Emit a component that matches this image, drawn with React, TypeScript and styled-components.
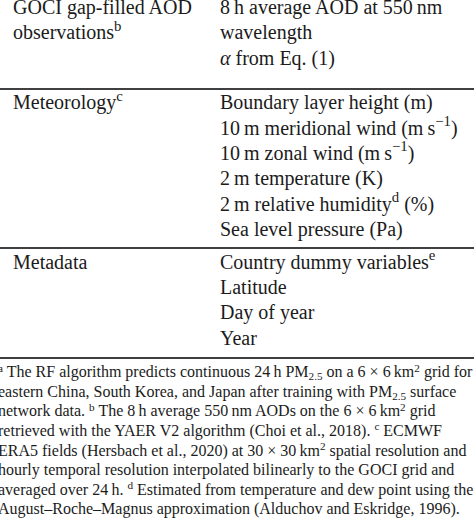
import React from 'react'
import styled, { createGlobalStyle } from 'styled-components'

// Styled Components
const GlobalStyle = createGlobalStyle`
  html, body {
    margin: 0;
    padding: 0;
    background: #ffffff;
    overflow: hidden;
  }
  body {
    font-family: "Liberation Serif", "Times New Roman", serif;
    color: #1b1b1b;
  }
`;

const Page = styled.div`
  width: 474px;
  height: 520px;
  overflow: hidden;
`;

const Table = styled.div`
  margin-top: -5px;
  display: flex;
  flex-direction: column;
`;

const Group = styled.div<{ $padTop: number; $padBottom: number }>`
  display: grid;
  grid-template-columns: 207px 1fr;
  padding: ${p => p.$padTop}px 0 ${p => p.$padBottom}px 13px;
  border-bottom: 2px solid #404040;
  font-size: 20px;
  line-height: 25.4px;
`;

const Label = styled.div`
  white-space: nowrap;
`;

const Values = styled.div`
  display: flex;
  flex-direction: column;
`;

const Line = styled.div`
  white-space: nowrap;
`;

const Sup = styled.sup`
  font-size: 74%;
  line-height: 0;
  vertical-align: 0;
  position: relative;
  top: -0.58em;
`;

const Sub = styled.sub`
  font-size: 74%;
  line-height: 0;
  vertical-align: 0;
  position: relative;
  top: 0.3em;
`;

const Greek = styled.span`
  font-style: italic;
`;

const Notes = styled.div`
  margin-left: -2px;
  padding-top: 3px;
  font-size: 16px;
  line-height: 19.6px;

  ${Sup} {
    font-size: 70%;
    top: -0.5em;
  }
  ${Sub} {
    font-size: 70%;
    top: 0.28em;
  }
`;

const NoteLine = styled.div`
  white-space: nowrap;
`;

interface GroupType {
  label: React.ReactNode;
  values: React.ReactNode[];
  padTop: number;
  padBottom: number;
}

const T = '\u2009';

const groups: GroupType[] = [
  {
    label: <>GOCI gap-filled AOD<br />observations<Sup>b</Sup></>,
    values: [
      <>8{T}h average AOD at 550{T}nm<br />wavelength</>,
      <><Greek>α</Greek> from Eq. (1)</>,
    ],
    padTop: 0,
    padBottom: 17,
  },
  {
    label: <>Meteorology<Sup>c</Sup></>,
    values: [
      'Boundary layer height (m)',
      <>10{T}m meridional wind (m{T}s<Sup>−1</Sup>)</>,
      <>10{T}m zonal wind (m{T}s<Sup>−1</Sup>)</>,
      <>2{T}m temperature (K)</>,
      <>2{T}m relative humidity<Sup>d</Sup> (%)</>,
      'Sea level pressure (Pa)',
    ],
    padTop: 0,
    padBottom: 4,
  },
  {
    label: 'Metadata',
    values: [
      <>Country dummy variables<Sup>e</Sup></>,
      'Latitude',
      'Day of year',
      'Year',
    ],
    padTop: 1,
    padBottom: 6,
  },
];

const App: React.FC = () => {
  return (
    <Page>
      <GlobalStyle />
      <Table>
        {groups.map((group, i) => (
          <Group key={i} $padTop={group.padTop} $padBottom={group.padBottom}>
            <Label>{group.label}</Label>
            <Values>
              {group.values.map((v, j) => (
                <Line key={j}>{v}</Line>
              ))}
            </Values>
          </Group>
        ))}
      </Table>

      <Notes>
        <NoteLine><Sup>a</Sup> The RF algorithm predicts continuous 24{T}h PM<Sub>2.5</Sub> on a 6 × 6{T}km<Sup>2</Sup> grid for</NoteLine>
        <NoteLine>eastern China, South Korea, and Japan after training with PM<Sub>2.5</Sub> surface</NoteLine>
        <NoteLine>network data. <Sup>b</Sup> The 8{T}h average 550{T}nm AODs on the 6 × 6{T}km<Sup>2</Sup> grid</NoteLine>
        <NoteLine>retrieved with the YAER V2 algorithm (Choi et al., 2018). <Sup>c</Sup> ECMWF</NoteLine>
        <NoteLine>ERA5 fields (Hersbach et al., 2020) at 30 × 30{T}km<Sup>2</Sup> spatial resolution and</NoteLine>
        <NoteLine>hourly temporal resolution interpolated bilinearly to the GOCI grid and</NoteLine>
        <NoteLine>averaged over 24{T}h. <Sup>d</Sup> Estimated from temperature and dew point using the</NoteLine>
        <NoteLine>August–Roche–Magnus approximation (Alduchov and Eskridge, 1996).</NoteLine>
      </Notes>
    </Page>
  )
}

export default App;
